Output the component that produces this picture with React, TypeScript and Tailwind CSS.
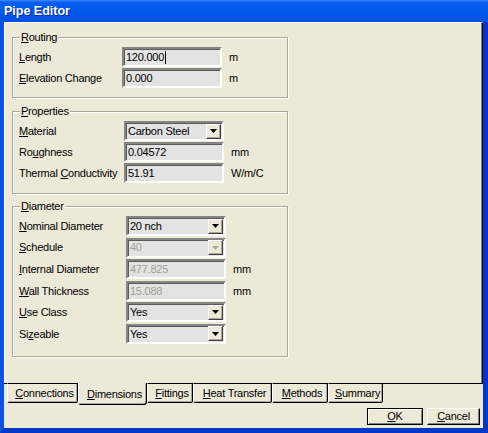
import type { ReactNode } from "react";

const U = ({ children }: { children: ReactNode }) => (
  <span className="underline underline-offset-[1px]">{children}</span>
);

const sunken =
  "border-2 border-t-[#858585] border-l-[#858585] border-b-white border-r-white shadow-[inset_1px_1px_0_#5a5a5a]";

function Field({ value, disabled, caret }: { value: string; disabled?: boolean; caret?: boolean }) {
  return (
    <div
      className={`flex h-[20px] w-[100px] items-center bg-[#e3e3e3] pl-[1px] ${sunken} ${
        disabled ? "text-[#a19f93]" : "text-black"
      }`}
    >
      <span className="pl-[1px]">{value}</span>
      {caret && <span className="ml-[1px] h-[13px] w-px bg-black" />}
    </div>
  );
}

function Combo({ value, disabled }: { value: string; disabled?: boolean }) {
  return (
    <div
      className={`flex h-[20px] w-[100px] items-center bg-[#e3e3e3] ${sunken} ${
        disabled ? "text-[#a19f93]" : "text-black"
      }`}
    >
      <span className="flex-1 pl-[2px]">{value}</span>
      <div className="mr-[1px] flex h-[15px] w-[15px] items-center justify-center border border-t-white border-l-white border-b-[#404040] border-r-[#404040] bg-[#ece9d8] shadow-[inset_-1px_-1px_0_#aca899]">
        <svg width="7" height="4" viewBox="0 0 7 4">
          <path d="M0 0h7L3.5 4z" fill={disabled ? "#aca899" : "#000"} />
        </svg>
      </div>
    </div>
  );
}

function Row({
  label,
  labelW,
  children,
  unit,
}: {
  label: ReactNode;
  labelW: string;
  children: ReactNode;
  unit?: string;
}) {
  return (
    <div className="flex h-[20px] items-center">
      <div className={`${labelW} shrink-0`}>{label}</div>
      {children}
      {unit && <span className="ml-[7px]">{unit}</span>}
    </div>
  );
}

function Group({
  title,
  className,
  children,
}: {
  title: ReactNode;
  className: string;
  children: ReactNode;
}) {
  return (
    <div
      className={`relative w-[276px] border border-[#aca899] pl-[6px] shadow-[1px_1px_0_white,inset_1px_1px_0_white] ${className}`}
    >
      <span className="absolute -top-[7px] left-[7px] bg-[#ece9d8] px-[1px] leading-[13px]">{title}</span>
      {children}
    </div>
  );
}

const tabs: { label: ReactNode; w: string; active?: boolean }[] = [
  { label: <><U>C</U>onnections</>, w: "w-[71px]" },
  { label: <><U>D</U>imensions</>, w: "w-[69px]", active: true },
  { label: <><U>F</U>ittings</>, w: "w-[46px]" },
  { label: <><U>H</U>eat Transfer</>, w: "w-[79px]" },
  { label: <><U>M</U>ethods</>, w: "w-[56px]" },
  { label: <><U>S</U>ummary</>, w: "w-[55px]" },
];

export default function App() {
  return (
    <div className="flex h-[433px] w-[488px] flex-col font-['Liberation_Sans',Arial,sans-serif] text-[11px] tracking-[-0.25px] text-black">
      {/* title bar */}
      <div className="flex h-[22px] shrink-0 items-center bg-[linear-gradient(to_bottom,#3d8cf5_0%,#0a5ef0_10%,#0058ec_45%,#0052e0_100%)] pl-[4px] pt-[1px] text-[12.5px] font-bold tracking-normal text-white [text-shadow:1px_1px_#0a2a9a]">
        Pipe Editor
      </div>

      <div className="flex flex-1 flex-col border-b-[5px] border-l-4 border-r-[5px] border-b-[#0238c4] border-l-[#0a52e6] border-r-[#0236c8] bg-[#ece9d8]">
        {/* tab page */}
        <div className="h-[361px] border-l border-r border-t border-l-white border-r-black border-t-white pl-[7px] pt-[14px] shadow-[inset_-1px_0_0_#808080]">
          <Group title={<><U>R</U>outing</>} className="flex flex-col gap-[1px] pb-[9px] pt-[9px]">
            <Row label={<><U>L</U>ength</>} labelW="w-[103px]" unit="m">
              <Field value="120.000" caret />
            </Row>
            <Row label={<><U>E</U>levation Change</>} labelW="w-[103px]" unit="m">
              <Field value="0.000" />
            </Row>
          </Group>

          <Group title={<><U>P</U>roperties</>} className="mt-[13px] flex flex-col gap-[1px] pb-[10px] pt-[9px]">
            <Row label={<><U>M</U>aterial</>} labelW="w-[105px]">
              <Combo value="Carbon Steel" />
            </Row>
            <Row label={<>Ro<U>u</U>ghness</>} labelW="w-[105px]" unit="mm">
              <Field value="0.04572" />
            </Row>
            <Row label={<>Thermal <U>C</U>onductivity</>} labelW="w-[105px]" unit="W/m/C">
              <Field value="51.91" />
            </Row>
          </Group>

          <Group title={<><U>D</U>iameter</>} className="mt-[12px] flex flex-col gap-[1.6px] pb-[12px] pt-[9px]">
            <Row label={<><U>N</U>ominal Diameter</>} labelW="w-[107px]">
              <Combo value="20 nch" />
            </Row>
            <Row label={<><U>S</U>chedule</>} labelW="w-[107px]">
              <Combo value="40" disabled />
            </Row>
            <Row label={<><U>I</U>nternal Diameter</>} labelW="w-[107px]" unit="mm">
              <Field value="477.825" disabled />
            </Row>
            <Row label={<><U>W</U>all Thickness</>} labelW="w-[107px]" unit="mm">
              <Field value="15.088" disabled />
            </Row>
            <Row label={<><U>U</U>se Class</>} labelW="w-[107px]">
              <Combo value="Yes" />
            </Row>
            <Row label={<>Si<U>z</U>eable</>} labelW="w-[107px]">
              <Combo value="Yes" />
            </Row>
          </Group>
        </div>

        {/* tab strip */}
        <div className="flex h-[22px] items-start">
          <div className="w-[3px] border-t border-black" />
          {tabs.map((t, i) =>
            t.active ? (
              <div
                key={i}
                className={`${t.w} flex h-[22px] items-center justify-center rounded-b-[3px] border-b border-l border-r border-b-black border-l-white border-r-black pl-[4px] pt-[1px] shadow-[inset_-1px_-1px_0_#aca899]`}
              >
                <span>{t.label}</span>
              </div>
            ) : (
              <div
                key={i}
                className={`${t.w} flex h-[20px] items-center justify-center rounded-b-[2px] border border-b-black border-l-white border-r-black border-t-black pl-[4px] shadow-[inset_-1px_-1px_0_#aca899]`}
              >
                <span>{t.label}</span>
              </div>
            )
          )}
          <div className="flex-1 border-t border-black" />
        </div>

        {/* buttons */}
        <div className="flex justify-end gap-[4px] pr-[3px] pt-[3px]">
          <button className="flex h-[17px] w-[56px] items-center justify-center border border-black bg-[#ece9d8] shadow-[inset_1px_1px_0_white,inset_-1px_-1px_0_#808080]">
            <span>
              <U>O</U>K
            </span>
          </button>
          <button className="flex h-[17px] w-[53px] items-center justify-center border border-b-black border-l-white border-r-black border-t-white bg-[#ece9d8] shadow-[inset_-1px_-1px_0_#808080]">
            <span>
              <U>C</U>ancel
            </span>
          </button>
        </div>
      </div>
    </div>
  );
}
